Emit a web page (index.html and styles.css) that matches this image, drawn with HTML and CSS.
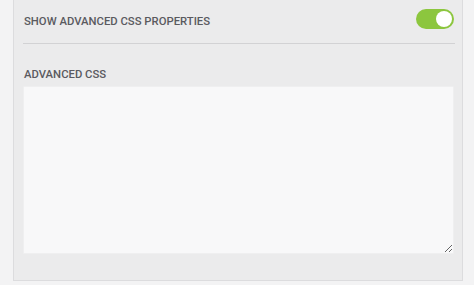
FILE: index.html
```html
<!DOCTYPE html>
<html>
<head>
<meta charset="utf-8">
<link rel="stylesheet" href="styles.css">
</head>
<body>
<div class="panel">
  <div class="row toggle-row">
    <span class="label">SHOW ADVANCED CSS PROPERTIES</span>
    <span class="switch"><span class="knob"></span></span>
  </div>
  <div class="field">
    <div class="label field-label">ADVANCED CSS</div>
    <textarea class="css-input"></textarea>
  </div>
</div>
</body>
</html>
```
FILE: styles.css
```css
html, body {
  margin: 0;
  padding: 0;
  background: #f3f3f4;
  width: 474px;
  height: 285px;
  overflow: hidden;
}
body {
  font-family: Roboto, "Liberation Sans", Arial, sans-serif;
}
.panel {
  margin-left: 13px;
  width: 450px;
  height: 281px;
  box-sizing: border-box;
  background: #ebebec;
  border: 1px solid #dcdcde;
  border-top: none;
  padding-left: 9px;
  padding-right: 7px;
}
.row {
  display: flex;
  align-items: center;
  justify-content: space-between;
}
.toggle-row {
  height: 44px;
  box-sizing: border-box;
  padding-bottom: 4px;
  border-bottom: 1px solid #d2d2d4;
}
.label {
  font-size: 11.3px;
  font-weight: 500;
  color: #5a5a5f;
  padding-left: 1px;
}
.toggle-row .label {
  margin-top: 3px;
}
.switch {
  width: 38px;
  height: 20px;
  border-radius: 10px;
  background: #8cc63e;
  position: relative;
  margin-right: 1px;
  margin-top: -1px;
}
.knob {
  position: absolute;
  right: 2px;
  top: 2px;
  width: 16px;
  height: 16px;
  border-radius: 50%;
  background: #fff;
}
.field {
  padding-top: 23px;
}
.field-label {
  line-height: 16px;
  margin-bottom: 3px;
}
.css-input {
  display: block;
  width: 431px;
  height: 168px;
  box-sizing: border-box;
  margin: 0;
  background: #f8f8f9;
  border: 1px solid #efeff0;
  border-radius: 1px;
  outline: none;
  resize: vertical;
}
```
